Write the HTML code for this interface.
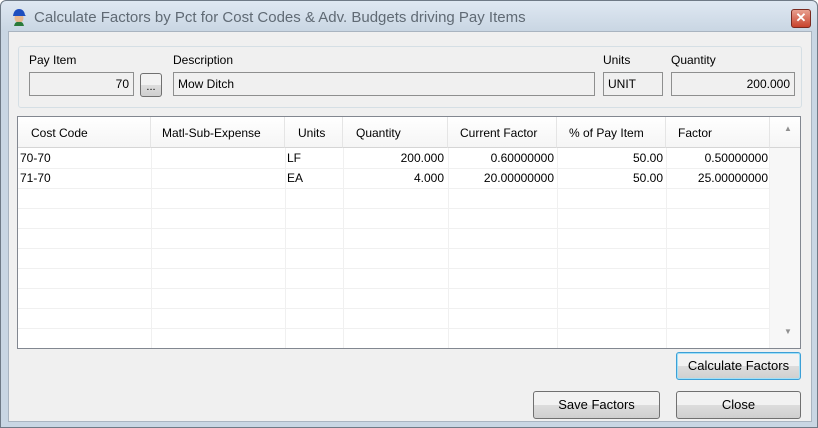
<html><head><style>
body{margin:0;width:818px;height:428px;overflow:hidden;font-family:"Liberation Sans",sans-serif;font-size:12px;color:#000}
.win{position:absolute;left:0;top:0;width:816px;height:426px;border:1px solid #6f7a86;border-radius:6px 6px 0 0;background:linear-gradient(#dfe8f2,#c9d6e3 30px);}
.title{position:absolute;left:33px;top:8px;font-size:15px;color:#606a74}
.client{position:absolute;left:7px;top:30px;width:802px;height:389px;background:#f0f0f0;border:1px solid #a9b4c0}
.abs{position:absolute}
.grp{left:9px;top:14px;width:782px;height:60px;border:1px solid #d5dfe5;border-radius:3px}
.box{position:absolute;height:24px;border:1px solid #8e8f8f;background:#f0f0f0;box-sizing:border-box;line-height:22px;padding:0 4px}
.btn{position:absolute;height:28px;box-sizing:border-box;border:1px solid #707070;border-radius:3px;background:linear-gradient(#f2f2f2 50%,#dddddd 50%,#cfcfcf);text-align:center;line-height:26px;font-size:13px}
.grid{left:8px;top:84px;width:782px;height:231px;border:1px solid #828790;background:#fff;overflow:hidden}
.hd{position:absolute;top:0;height:31px;line-height:32px;border-right:1px solid #e5e5e5;border-bottom:1px solid #d5d5d5;box-sizing:border-box;background:linear-gradient(#fff,#f5f5f5);}
.vl{position:absolute;top:31px;width:1px;height:200px;background:#f0f0f0}
.hl{position:absolute;left:0;width:752px;height:1px;background:#f0f0f0}
.c{position:absolute;line-height:20px}
</style></head><body>
<div class="win">
<svg class="abs" style="left:10px;top:7px" width="16" height="18" viewBox="0 0 16 18"><ellipse cx="8" cy="10" rx="4.5" ry="5" fill="#e8b890"/><path d="M2 8 Q3 1 8 1 Q13 1 14 7 L15 8 L2 8Z" fill="#1f4fbf"/><path d="M3 18 Q4 13 8 14 Q12 13 13 18Z" fill="#2a7a3a"/></svg>
<div class="title">Calculate Factors by Pct for Cost Codes &amp; Adv. Budgets driving Pay Items</div>
<div class="abs" style="left:790px;top:8px;width:18px;height:17px;border:1px solid #7a2a20;border-radius:3px;background:linear-gradient(#e8a090,#c8422c);color:#fff;font-weight:bold;text-align:center;line-height:16px;font-size:13px">✕</div>
<div class="client">
<div class="abs grp"></div>
<div class="abs" style="left:20px;top:21px">Pay Item</div>
<div class="abs" style="left:164px;top:21px">Description</div>
<div class="abs" style="left:594px;top:21px">Units</div>
<div class="abs" style="left:662px;top:21px">Quantity</div>
<div class="box" style="left:20px;top:40px;width:105px;text-align:right">70</div>
<div class="btn" style="left:131px;top:41px;width:22px;height:24px;line-height:26px;font-size:11px">...</div>
<div class="box" style="left:164px;top:40px;width:422px">Mow Ditch</div>
<div class="box" style="left:594px;top:40px;width:60px">UNIT</div>
<div class="box" style="left:662px;top:40px;width:124px;text-align:right">200.000</div>
<div class="abs grid">
<div class="hd" style="left:0;width:133px;padding-left:13px">Cost Code</div>
<div class="hd" style="left:133px;width:134px;padding-left:11px">Matl-Sub-Expense</div>
<div class="hd" style="left:267px;width:58px;padding-left:13px">Units</div>
<div class="hd" style="left:325px;width:105px;padding-left:13px">Quantity</div>
<div class="hd" style="left:430px;width:109px;padding-left:12px">Current Factor</div>
<div class="hd" style="left:539px;width:109px;padding-left:12px">% of Pay Item</div>
<div class="hd" style="left:648px;width:104px;padding-left:12px">Factor</div>
<div class="hd" style="left:752px;width:30px;border-right:0"></div>
<div class="abs" style="left:752px;top:31px;width:30px;height:201px;background:#f7f7f7"></div>
<div class="abs" style="left:766px;top:7px;color:#909090;font-size:8px">▲</div>
<div class="abs" style="left:766px;top:210px;color:#909090;font-size:8px">▼</div>
<div class="vl" style="left:133px"></div><div class="vl" style="left:267px"></div><div class="vl" style="left:325px"></div><div class="vl" style="left:430px"></div><div class="vl" style="left:539px"></div><div class="vl" style="left:648px"></div><div class="vl" style="left:751px"></div>
<div class="hl" style="top:51px"></div><div class="hl" style="top:71px"></div><div class="hl" style="top:91px"></div><div class="hl" style="top:111px"></div><div class="hl" style="top:131px"></div><div class="hl" style="top:151px"></div><div class="hl" style="top:171px"></div><div class="hl" style="top:191px"></div><div class="hl" style="top:211px"></div>
<div class="c" style="left:2px;top:31px">70-70</div><div class="c" style="left:269px;top:31px">LF</div>
<div class="c" style="left:325px;top:31px;width:101px;text-align:right">200.000</div>
<div class="c" style="left:430px;top:31px;width:106px;text-align:right">0.60000000</div>
<div class="c" style="left:539px;top:31px;width:106px;text-align:right">50.00</div>
<div class="c" style="left:648px;top:31px;width:102px;text-align:right">0.50000000</div>
<div class="c" style="left:2px;top:51px">71-70</div><div class="c" style="left:269px;top:51px">EA</div>
<div class="c" style="left:325px;top:51px;width:101px;text-align:right">4.000</div>
<div class="c" style="left:430px;top:51px;width:106px;text-align:right">20.00000000</div>
<div class="c" style="left:539px;top:51px;width:106px;text-align:right">50.00</div>
<div class="c" style="left:648px;top:51px;width:102px;text-align:right">25.00000000</div>
</div>
<div class="btn" style="left:667px;top:320px;width:125px;border-color:#3c9fd6;box-shadow:inset 0 0 0 1px #9fe0f8">Calculate Factors</div>
<div class="btn" style="left:524px;top:359px;width:127px">Save Factors</div>
<div class="btn" style="left:667px;top:359px;width:125px">Close</div>
</div>
</div>
</body></html>
